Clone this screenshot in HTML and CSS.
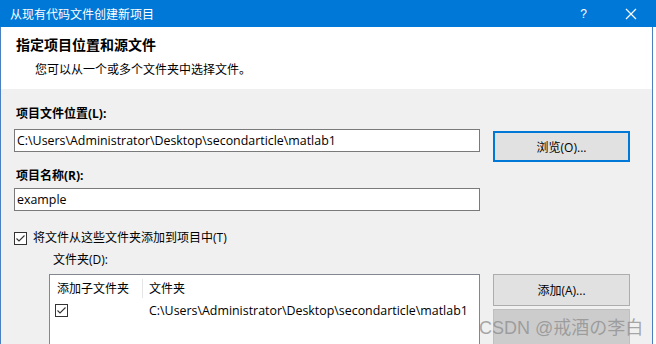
FILE: index.html
```html
<!DOCTYPE html>
<html lang="zh-CN">
<head>
<meta charset="utf-8">
<title>从现有代码文件创建新项目</title>
<link rel="stylesheet" href="styles.css">
</head>
<body>
<div class="titlebar">
  <span class="title">从现有代码文件创建新项目</span>
  <span class="help">?</span>
  <svg class="close" width="12" height="12" viewBox="0 0 12 12"><path d="M1 1 L11 11 M11 1 L1 11" stroke="#fff" stroke-width="1.2" fill="none"/></svg>
</div>
<div class="window">
  <div class="header">
    <div class="h-title">指定项目位置和源文件</div>
    <div class="h-sub">您可以从一个或多个文件夹中选择文件。</div>
  </div>
  <div class="content">
    <div class="label l1">项目文件位置(L):</div>
    <div class="row r1">
      <div class="input">C:\Users\Administrator\Desktop\secondarticle\matlab1</div>
      <div class="btn btn-focus">浏览(O)...</div>
    </div>
    <div class="label l2">项目名称(R):</div>
    <div class="row r2">
      <div class="input">example</div>
    </div>
    <div class="check-row">
      <svg class="cb" width="13" height="13" viewBox="0 0 13 13"><rect x="0.5" y="0.5" width="12" height="12" fill="#fff" stroke="#333"/><path d="M2.5 6.5 L5 9 L10.5 3.5" stroke="#333" stroke-width="1.1" fill="none"/></svg>
      <span>将文件从这些文件夹添加到项目中(T)</span>
    </div>
    <div class="folder-label">文件夹(D):</div>
    <div class="row r3">
      <div class="list">
        <div class="list-head">
          <div class="col1">添加子文件夹</div>
          <div class="sep"></div>
          <div class="col2">文件夹</div>
        </div>
        <div class="list-row">
          <div class="col1"><svg class="cb" width="13" height="13" viewBox="0 0 13 13"><rect x="0.5" y="0.5" width="12" height="12" fill="#fff" stroke="#333"/><path d="M2.5 6.5 L5 9 L10.5 3.5" stroke="#333" stroke-width="1.1" fill="none"/></svg></div>
          <div class="col2 path">C:\Users\Administrator\Desktop\secondarticle\matlab1</div>
        </div>
      </div>
      <div class="btn-col">
        <div class="btn">添加(A)...</div>
        <div class="btn btn-disabled"></div>
      </div>
    </div>
  </div>
</div>
<div class="watermark">CSDN @戒酒の李白</div>
</body>
</html>
```
FILE: styles.css
```css
* { box-sizing: border-box; }
html, body { margin: 0; padding: 0; }
body {
  width: 656px;
  height: 344px;
  overflow: hidden;
  background: #ffffff;
  font-family: "Open Sans", "Noto Sans CJK SC", sans-serif;
  font-size: 12px;
  color: #000;
  position: relative;
}
.titlebar {
  height: 27px;
  background: #0078d7;
  color: #fff;
  display: flex;
  align-items: center;
  padding-left: 10px;
}
.title { font-size: 12px; flex: 1; }
.help { font-size: 12px; margin-right: 38px; font-weight: 300; font-family: "Liberation Sans", sans-serif; }
.close { margin-right: 19px; }
.window {
  width: 653px;
  height: 317px;
  border-left: 1px solid #4a7fc0;
  border-right: 1px solid #4a7fc0;
  display: flex;
  flex-direction: column;
}
.header {
  flex-shrink: 0;
  background: #fff;
  height: 62px;
  padding-left: 15px;
  padding-top: 9px;
}
.h-title { font-size: 14px; font-weight: bold; line-height: 18px; }
.h-sub { padding-left: 19px; line-height: 16px; margin-top: 8px; }
.content {
  flex: 1;
  min-height: 0;
  overflow: hidden;
  background: #f0f0f0;
  padding-left: 13px;
}
.label { font-weight: bold; line-height: 16px; }
.l1 { margin-top: 17px; padding-left: 2px; }
.l2 { margin-top: 6px; padding-left: 2px; }
.row { display: flex; align-items: flex-start; }
.r1 { margin-top: 7px; }
.r2 { margin-top: 4px; }
.input {
  width: 466px;
  height: 23px;
  background: #fff;
  border: 1px solid #7a7a7a;
  padding-left: 2px;
  line-height: 21px;
  font-size: 12.4px;
  white-space: nowrap;
  overflow: hidden;
}
.path { font-size: 12.4px; }
.btn {
  width: 137px;
  height: 32px;
  background: #e1e1e1;
  border: 1px solid #adadad;
  display: flex;
  align-items: center;
  justify-content: center;
}
.btn-focus {
  margin-top: 2px;
  margin-left: 13px;
  height: 31px;
  border: 2px solid #0078d7;
}
.check-row {
  margin-top: 19px;
  display: flex;
  align-items: center;
  line-height: 16px;
}
.check-row .cb { margin-right: 6px; }
.cb { display: block; }
.folder-label { margin-top: 6px; padding-left: 39px; line-height: 16px; }
.r3 { margin-top: 6px; }
.list {
  margin-left: 35px;
  width: 431px;
  height: 80px;
  background: #fff;
  border: 1px solid #828790;
  border-bottom: none;
}
.list-head {
  display: flex;
  align-items: center;
  height: 25px;
}
.list-head .col1 { width: 92px; padding-left: 7px; color: #000; }
.sep { width: 1px; height: 19px; background: #e5e5e5; margin-top: 2px; }
.col2 { padding-left: 6px; }
.list-row {
  display: flex;
  align-items: center;
  height: 20px;
}
.list-row .col1 { width: 93px; padding-left: 5px; }
.btn-col {
  margin-left: 13px;
  display: flex;
  flex-direction: column;
  gap: 3px;
}
.btn-disabled {
  height: 40px;
  background: #cccccc;
  border-color: #bfbfbf;
}
.watermark {
  position: absolute;
  left: 479px;
  top: 313px;
  font-size: 18px;
  color: rgba(140, 140, 140, 0.75);
  font-family: "Liberation Sans", "Noto Sans CJK SC", sans-serif;
  white-space: nowrap;
}
```
